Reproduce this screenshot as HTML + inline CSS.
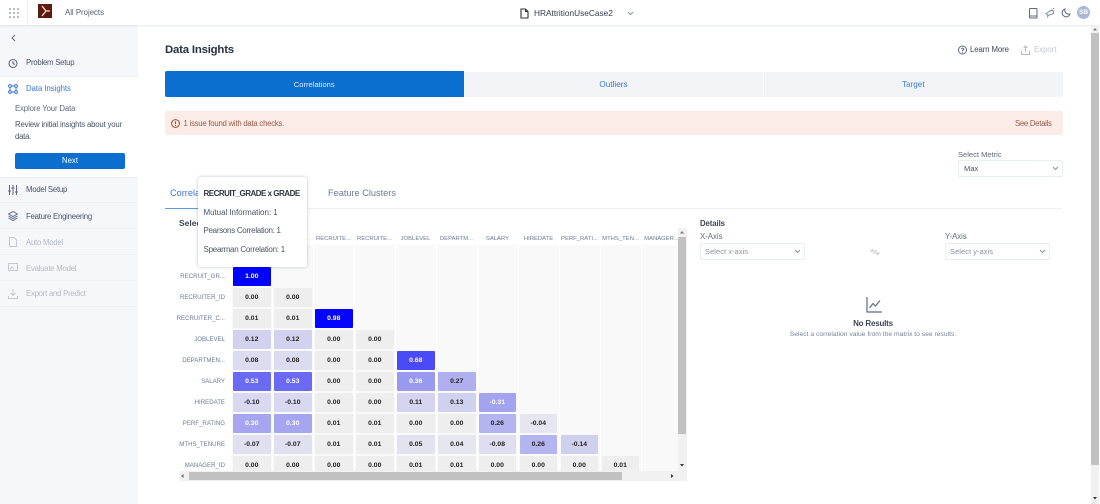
<!DOCTYPE html>
<html><head><meta charset="utf-8"><style>
html,body{margin:0;padding:0;width:1100px;height:504px;overflow:hidden;background:#fff;font-family:"Liberation Sans",sans-serif;color:#3c4657}
div,span,svg{position:absolute;box-sizing:border-box}
.t{white-space:nowrap;font-size:7.8px;letter-spacing:-.25px;line-height:12px}
.n{color:#4a5568;left:26px}
.d{color:#b5bac3;left:26px}
.sep{left:0;width:138px;height:1px;background:#eef0f6}
.ic{fill:none;stroke:#5d6b82;stroke-width:1}
.hd{top:233px;width:41px;text-align:center;font-size:5.9px;line-height:12px;color:#6b7a94;white-space:nowrap}
.rl{left:170px;width:55px;text-align:right;font-size:6.1px;line-height:12px;color:#6b7a94;white-space:nowrap}
.col{top:245px;height:226px;width:40px;background:#f9f9f9}
.c{width:37.5px;height:18.5px;background:#eee;border-radius:1px;text-align:center;font-size:6.8px;font-weight:bold;line-height:20px;color:#222}
.w{color:#fff}
.x1{left:233px}.x2{left:274px}.x3{left:315px}.x4{left:356px}.x5{left:397px}.x6{left:438px}.x7{left:478.5px}.x8{left:519.5px}.x9{left:560.5px}.x10{left:601.5px}
.y1{top:267px}.y2{top:288px}.y3{top:309px}.y4{top:330px}.y5{top:351px}.y6{top:372px}.y7{top:393px}.y8{top:414px}.y9{top:435px}.y10{top:456px;height:15px;border-radius:1px 1px 0 0;line-height:19.5px}
.sel{height:17px;background:#fff;border:1px solid #e9edf5;border-radius:2px;font-size:7.6px;line-height:15px;padding-left:4px;color:#8a93a3;white-space:nowrap}
</style></head><body>

<!-- sidebar -->
<div style="left:0;top:25px;width:138px;height:479px;background:#f6f7fb"></div>
<div style="left:0;top:77px;width:138px;height:100px;background:#fff"></div>
<div class="sep" style="top:76px"></div><div class="sep" style="top:177px"></div><div class="sep" style="top:202px"></div><div class="sep" style="top:228px"></div><div class="sep" style="top:254px"></div><div class="sep" style="top:280px"></div><div class="sep" style="top:306px"></div>

<!-- header -->
<div style="left:0;top:0;width:1100px;height:25px;background:#fff;box-shadow:0 1px 2px rgba(60,70,90,.12)"></div>
<div style="left:27px;top:0;width:1px;height:25px;background:#eef0f4"></div>
<svg style="left:9px;top:8px" width="10" height="10" fill="#5d6b82"><circle cx="1" cy="1" r=".8"/><circle cx="5" cy="1" r=".8"/><circle cx="9" cy="1" r=".8"/><circle cx="1" cy="5" r=".8"/><circle cx="5" cy="5" r=".8"/><circle cx="9" cy="5" r=".8"/><circle cx="1" cy="9" r=".8"/><circle cx="5" cy="9" r=".8"/><circle cx="9" cy="9" r=".8"/></svg>
<svg style="left:38px;top:4px" width="14" height="14"><rect width="14" height="14" fill="#5e1b0d"/><path d="M4 2 L8 7 L4 12 M8 7 H12" fill="none" stroke="#f3e3dc" stroke-width="1.3"/></svg>
<div class="t" style="left:65px;top:7px;color:#555f70;letter-spacing:0">All Projects</div>
<svg class="ic" style="left:520px;top:8px;stroke:#333;stroke-width:1.1" width="9" height="11"><path d="M1 1 H5.5 L8 3.5 V10 H1 Z M5.5 1 V3.5 H8"/></svg>
<div class="t" style="left:534px;top:7px;color:#333b48;font-size:8.3px;letter-spacing:0">HRAttritionUseCase2</div>
<svg class="ic" style="left:627px;top:11px;stroke:#8a93a3" width="7" height="5"><path d="M1 1 L3.5 3.5 L6 1"/></svg>
<svg class="ic" style="left:1029px;top:8px" width="9" height="11"><rect x=".5" y=".5" width="7.5" height="9.5" rx=".5"/><path d="M.5 8 H8"/></svg>
<svg class="ic" style="left:1045px;top:8px;stroke:#7d899c" width="10" height="10"><path d="M1 5.5 L7 2 Q9 3 8.5 5.5 L3 7.5 Z M3 7.5 L2.5 9.5 M8 1 L9 0"/></svg>
<svg class="ic" style="left:1061px;top:8px" width="10" height="10"><path d="M4 1 A4 4 0 1 0 9 6 A4 4 0 0 1 4 1 Z"/></svg>
<div style="left:1077px;top:6px;width:13px;height:13px;border-radius:50%;background:#aab8d8;color:#fff;font-size:6.5px;text-align:center;line-height:13px;font-weight:bold">SB</div>

<!-- sidebar items -->
<svg class="ic" style="left:8px;top:57.5px;stroke:#5d6b82;stroke-width:1.1" width="10" height="11"><path d="M5 3 V5.5 L7 6.5"/><circle cx="5" cy="5.5" r="4"/></svg>
<svg class="ic" style="left:10px;top:34px;stroke:#5d6b82" width="7" height="8"><path d="M5 1 L2 4 L5 7"/></svg>
<div class="t n" style="top:57px">Problem Setup</div>
<svg class="ic" style="left:8px;top:84px;stroke:#3878d0" width="10" height="10"><circle cx="2" cy="2" r="1.4"/><circle cx="8" cy="2" r="1.4"/><circle cx="2" cy="8" r="1.4"/><circle cx="8" cy="8" r="1.4"/><path d="M3.5 2 H6.5 M3.5 8 H6.5 M2 3.5 V6.5 M8 3.5 V6.5"/></svg>
<div class="t" style="left:26px;top:83px;color:#3878d0;letter-spacing:-.05px">Data Insights</div>
<div class="t" style="left:15px;top:103px;color:#5f6b7e;letter-spacing:-.15px">Explore Your Data</div>
<div class="t" style="left:15px;top:119px;color:#4a5568;letter-spacing:-.18px">Review initial insights about your</div>
<div class="t" style="left:15px;top:131px;color:#4a5568">data.</div>
<div style="left:15px;top:153px;width:110px;height:16px;background:#0b6fd0;border-radius:2px;color:#fff;font-size:7.8px;text-align:center;line-height:16px">Next</div>
<svg class="ic" style="left:8px;top:185px;stroke:#5d6b82" width="10" height="10"><path d="M1.5 0 V10 M5 0 V10 M8.5 0 V10 M0 6 H3 M3.5 3 H6.5 M7 7 H10"/></svg>
<div class="t n" style="top:184px">Model Setup</div>
<svg class="ic" style="left:8px;top:211px;stroke:#5d6b82" width="10" height="10"><path d="M5 .5 L9.5 3 L5 5.5 L.5 3 Z M.5 5 L5 7.5 L9.5 5 M.5 7 L5 9.5 L9.5 7"/></svg>
<div class="t n" style="top:210.500px">Feature Engineering</div>
<svg class="ic" style="left:9px;top:237px;stroke:#c5c9d1" width="8" height="10"><path d="M.5 .5 H5 L7.5 3 V9.5 H.5 Z"/></svg>
<div class="t d" style="top:236.500px">Auto Model</div>
<svg class="ic" style="left:8px;top:263px;stroke:#c5c9d1" width="10" height="9"><rect x=".5" y=".5" width="9" height="7"/><path d="M2 6 L4 4 L6 5.5"/></svg>
<div class="t d" style="top:262.500px">Evaluate Model</div>
<svg class="ic" style="left:8px;top:289px;stroke:#c5c9d1" width="10" height="10"><path d="M5 0 V6 M2.5 4 L5 6.5 L7.5 4 M.5 7 V9.5 H9.5 V7"/></svg>
<div class="t d" style="top:288px">Export and Predict</div>

<!-- title -->
<div style="left:165px;top:43px;font-size:11.4px;letter-spacing:-.2px;font-weight:bold;color:#263040;line-height:15px;white-space:nowrap">Data Insights</div>
<svg class="ic" style="left:958px;top:45px;stroke:#5d6b82" width="9" height="10"><circle cx="4.5" cy="5" r="4"/><path d="M3.2 4 Q4.5 2.3 5.8 4 Q5.6 5 4.5 5.5 V6.3 M4.5 7 V7.6"/></svg>
<div class="t" style="left:970px;top:44px;color:#3c4657;letter-spacing:-.1px">Learn More</div>
<svg class="ic" style="left:1021px;top:45px;stroke:#b5bac3" width="9" height="10"><path d="M4.5 7 V1 M2.5 3 L4.5 1 L6.5 3 M.5 6 V9.5 H8.5 V6"/></svg>
<div class="t" style="left:1034px;top:44px;color:#c2c6ce;letter-spacing:0">Export</div>

<!-- main tabs -->
<div style="left:165px;top:71px;width:298.500px;height:26px;background:#0b6fd0;border-radius:2px 0 0 2px;color:#dfeaf8;font-size:7.6px;text-align:center;line-height:27px">Correlations</div>
<div style="left:464px;top:72px;width:299px;height:25px;background:#f2f4f8;color:#3a7ccc;font-size:8.2px;text-align:center;line-height:25px">Outliers</div>
<div style="left:764px;top:72px;width:298.500px;height:25px;background:#f2f4f8;color:#3a7ccc;font-size:8.2px;text-align:center;line-height:25px;border-radius:0 2px 2px 0">Target</div>

<!-- alert -->
<div style="left:165px;top:111px;width:897.500px;height:24px;background:#fcece8;border-radius:2px"></div>
<svg class="ic" style="left:171px;top:119px;stroke:#a9482f" width="9" height="9"><circle cx="4.5" cy="4.5" r="3.9"/><path d="M4.5 2.2 V5.2 M4.5 6 V6.9"/></svg>
<div class="t" style="left:183.500px;top:117.500px;color:#9a5a45">1 issue found with data checks.</div>
<div class="t" style="left:1015px;top:118px;color:#9a5a45;letter-spacing:-.3px">See Details</div>

<!-- metric -->
<div class="t" style="left:958px;top:148.500px;color:#5f6b7e;letter-spacing:-.02px;font-size:7.6px">Select Metric</div>
<div class="sel" style="left:958px;top:160px;width:104.500px;color:#4a5568;padding-left:5px">Max</div>
<svg class="ic" style="left:1052px;top:166px;stroke:#8a93a3" width="7" height="5"><path d="M1 1 L3.5 3.5 L6 1"/></svg>

<!-- subtabs -->
<div style="left:165px;top:208px;width:897px;height:1px;background:#eef1f6"></div>
<div style="left:165px;top:207.500px;width:33px;height:1.200px;background:#5a9be0"></div>
<div style="left:170px;top:187px;font-size:9.2px;line-height:13px;color:#3878d0;white-space:nowrap">Correlation Diagram</div>
<div style="left:328px;top:187px;font-size:9.2px;line-height:13px;color:#6b7a94;white-space:nowrap">Feature Clusters</div>
<div style="left:179px;top:217px;font-size:8.5px;line-height:12px;color:#3c4657;font-weight:bold;white-space:nowrap">Select</div>

<!-- matrix -->
<div class="col" style="left:232px"></div><div class="col" style="left:273px"></div><div class="col" style="left:314px"></div><div class="col" style="left:355px"></div><div class="col" style="left:396px"></div><div class="col" style="left:437px"></div><div class="col" style="left:477.500px"></div><div class="col" style="left:518.500px"></div><div class="col" style="left:559.500px"></div><div class="col" style="left:600.500px"></div><div class="col" style="left:641.500px;width:36px"></div>

<div class="hd" style="left:231px">RECRUIT...</div>
<div class="hd" style="left:272px">RECRUIT...</div>
<div class="hd" style="left:313px">RECRUITE...</div>
<div class="hd" style="left:354px">RECRUITE...</div>
<div class="hd" style="left:395px">JOBLEVEL</div>
<div class="hd" style="left:436px">DEPARTM...</div>
<div class="hd" style="left:477px">SALARY</div>
<div class="hd" style="left:518px">HIREDATE</div>
<div class="hd" style="left:559px">PERF_RATI...</div>
<div class="hd" style="left:600px">MTHS_TEN...</div>
<div class="hd" style="left:641px">MANAGER...</div>

<div class="rl" style="top:271px">RECRUIT_GR...</div>
<div class="rl" style="top:292px">RECRUITER_ID</div>
<div class="rl" style="top:313px">RECRUITER_C...</div>
<div class="rl" style="top:334px">JOBLEVEL</div>
<div class="rl" style="top:355px">DEPARTMEN...</div>
<div class="rl" style="top:376px">SALARY</div>
<div class="rl" style="top:397px">HIREDATE</div>
<div class="rl" style="top:418px">PERF_RATING</div>
<div class="rl" style="top:439px">MTHS_TENURE</div>
<div class="rl" style="top:460px">MANAGER_ID</div>

<div class="c w x1 y1" style="background:#0000ff">1.00</div>
<div class="c x1 y2">0.00</div><div class="c x2 y2">0.00</div>
<div class="c x1 y3">0.01</div><div class="c x2 y3">0.01</div><div class="c w x3 y3" style="background:#0505fd">0.98</div>
<div class="c x1 y4" style="background:#d2d2f0">0.12</div><div class="c x2 y4" style="background:#d2d2f0">0.12</div><div class="c x3 y4">0.00</div><div class="c x4 y4">0.00</div>
<div class="c x1 y5" style="background:#dcdcf0">0.08</div><div class="c x2 y5" style="background:#dcdcf0">0.08</div><div class="c x3 y5">0.00</div><div class="c x4 y5">0.00</div><div class="c w x5 y5" style="background:#4a4af8">0.68</div>
<div class="c w x1 y6" style="background:#6a6af5">0.53</div><div class="c w x2 y6" style="background:#6a6af5">0.53</div><div class="c x3 y6">0.00</div><div class="c x4 y6">0.00</div><div class="c w x5 y6" style="background:#9999ee">0.36</div><div class="c x6 y6" style="background:#b0b0f0">0.27</div>
<div class="c x1 y7" style="background:#d8d8f0">-0.10</div><div class="c x2 y7" style="background:#d8d8f0">-0.10</div><div class="c x3 y7">0.00</div><div class="c x4 y7">0.00</div><div class="c x5 y7" style="background:#d4d4f0">0.11</div><div class="c x6 y7" style="background:#d0d0ef">0.13</div><div class="c w x7 y7" style="background:#a3a3f0">-0.31</div>
<div class="c w x1 y8" style="background:#a6a6f0">0.30</div><div class="c w x2 y8" style="background:#a6a6f0">0.30</div><div class="c x3 y8">0.01</div><div class="c x4 y8">0.01</div><div class="c x5 y8">0.00</div><div class="c x6 y8">0.00</div><div class="c x7 y8" style="background:#b4b4f0">0.26</div><div class="c x8 y8" style="background:#e6e6f0">-0.04</div>
<div class="c x1 y9" style="background:#e0e0f0">-0.07</div><div class="c x2 y9" style="background:#e0e0f0">-0.07</div><div class="c x3 y9">0.01</div><div class="c x4 y9">0.01</div><div class="c x5 y9" style="background:#e3e3f0">0.05</div><div class="c x6 y9" style="background:#e6e6f0">0.04</div><div class="c x7 y9" style="background:#dedef0">-0.08</div><div class="c x8 y9" style="background:#b4b4f0">0.26</div><div class="c x9 y9" style="background:#cfcfee">-0.14</div>
<div class="c x1 y10">0.00</div><div class="c x2 y10">0.00</div><div class="c x3 y10">0.00</div><div class="c x4 y10">0.00</div><div class="c x5 y10">0.01</div><div class="c x6 y10">0.01</div><div class="c x7 y10">0.00</div><div class="c x8 y10">0.00</div><div class="c x9 y10">0.00</div><div class="c x10 y10">0.01</div>

<!-- matrix scrollbars -->
<div style="left:677.500px;top:228px;width:9px;height:243px;background:#f1f1f1"></div>
<div style="left:678px;top:237px;width:8px;height:197px;background:#c1c1c1"></div>
<div style="left:179px;top:471px;width:507.500px;height:10px;background:#f1f1f1"></div>
<div style="left:189px;top:472px;width:433px;height:8px;background:#c1c1c1"></div>
<svg style="left:180px;top:473px" width="5" height="6" fill="#666"><path d="M3.5 1 L1 3 L3.5 5 Z"/></svg>
<svg style="left:670px;top:473px" width="5" height="6" fill="#333"><path d="M1 1 L3.5 3 L1 5 Z"/></svg>
<svg style="left:679px;top:230px" width="6" height="5" fill="#777"><path d="M3 1 L5 3.5 H1 Z"/></svg>
<svg style="left:679px;top:463px" width="6" height="5" fill="#333"><path d="M1 1 H5 L3 3.5 Z"/></svg>

<!-- tooltip -->
<div style="left:198px;top:177px;width:108.500px;height:89.500px;background:#fff;border-radius:3px;box-shadow:0 0 3px rgba(40,50,70,.3)"></div>
<div style="left:203.500px;top:187px;font-size:8px;letter-spacing:-.5px;line-height:13px;font-weight:bold;color:#2d3644;white-space:nowrap">RECRUIT_GRADE x GRADE</div>
<div class="t" style="left:203.500px;top:207px;color:#4a5568;font-size:8px;letter-spacing:-.05px">Mutual Information: 1</div>
<div class="t" style="left:203.500px;top:225px;color:#4a5568;font-size:8px;letter-spacing:-.3px">Pearsons Correlation: 1</div>
<div class="t" style="left:203.500px;top:244px;color:#4a5568;font-size:8px;letter-spacing:-.25px">Spearman Correlation: 1</div>

<!-- details -->
<div class="t" style="left:700px;top:218px;color:#3c4657;font-weight:bold;letter-spacing:-.1px">Details</div>
<div class="t" style="left:700px;top:231px;color:#5f6b7e;letter-spacing:0">X-Axis</div>
<div class="t" style="left:945px;top:231px;color:#5f6b7e;letter-spacing:0">Y-Axis</div>
<div class="sel" style="left:700px;top:243px;width:104.500px">Select x-axis</div>
<svg class="ic" style="left:794px;top:249px;stroke:#8a93a3" width="7" height="5"><path d="M1 1 L3.5 3.5 L6 1"/></svg>
<div class="sel" style="left:945px;top:243px;width:104.500px">Select y-axis</div>
<svg class="ic" style="left:1039px;top:249px;stroke:#8a93a3" width="7" height="5"><path d="M1 1 L3.5 3.5 L6 1"/></svg>
<svg class="ic" style="left:870px;top:248px;stroke:#c2c6ce" width="10" height="8"><path d="M3 1 L1 3 H7 M7 7 L9 5 H3"/></svg>
<svg class="ic" style="left:866px;top:297px;stroke:#5d6b82;stroke-width:1.2" width="16" height="16"><path d="M1 0 V15 H16 M3.5 11 L7 6.5 L9.5 9 L14 3.500"/></svg>
<div style="left:773px;top:318px;width:200px;text-align:center;font-size:8px;letter-spacing:-.2px;font-weight:bold;line-height:12px;color:#3c4657">No Results</div>
<div style="left:773px;top:329px;width:200px;text-align:center;font-size:6.75px;line-height:12px;color:#78839a;white-space:nowrap">Select a correlation value from the matrix to see results.</div>

<!-- page scrollbar -->
<div style="left:1091px;top:26px;width:8px;height:478px;background:#f1f1f1"></div>
<div style="left:1091px;top:33px;width:8px;height:432px;background:#c1c1c1"></div>
<svg style="left:1092px;top:27px" width="6" height="5" fill="#777"><path d="M3 1 L5 3.5 H1 Z"/></svg>
<svg style="left:1092px;top:496px" width="6" height="5" fill="#333"><path d="M1 1 H5 L3 3.5 Z"/></svg>

</body></html>
